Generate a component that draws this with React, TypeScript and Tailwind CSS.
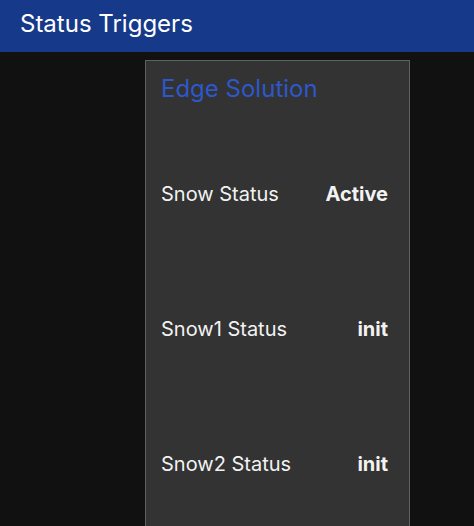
import React from 'react';

interface StatusItem {
  label: string;
  value: string;
}

const statusItems: StatusItem[] = [
  { label: 'Snow Status', value: 'Active' },
  { label: 'Snow1 Status', value: 'init' },
  { label: 'Snow2 Status', value: 'init' },
];

const StatusRow: React.FC<StatusItem> = ({ label, value }) => (
  <div className="flex items-center justify-between h-[135px] text-xl">
    <dt>{label}</dt>
    <dd className="font-bold">{value}</dd>
  </div>
);

export default function App() {
  return (
    <div className="flex flex-col h-screen overflow-hidden bg-[#111111] text-[#f2f2f2] font-['Inter',sans-serif]">
      <header className="shrink-0 h-[52px] px-5 pt-1 bg-[#163989]">
        <h1 className="text-2xl leading-10 text-white">Status Triggers</h1>
      </header>

      <main className="flex-1 pl-[145px] pr-16 pt-2">
        <section className="min-h-full pl-[15px] pr-[21px] pt-3 bg-[#333333] border border-[#606060]">
          <h2 className="text-2xl leading-8 text-[#2c58cc]">Edge Solution</h2>
          <dl className="pt-[21px]">
            {statusItems.map(item => (
              <StatusRow key={item.label} {...item} />
            ))}
          </dl>
        </section>
      </main>
    </div>
  );
}
